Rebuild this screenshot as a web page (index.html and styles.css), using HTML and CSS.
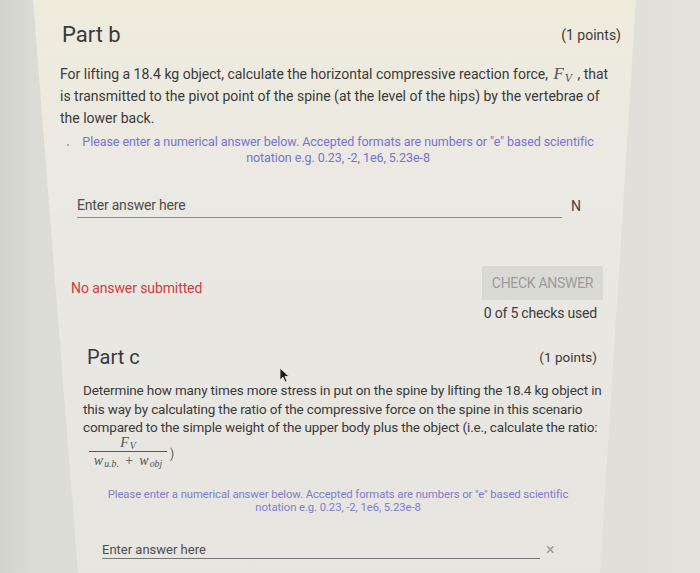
FILE: index.html
```html
<!DOCTYPE html>
<html>
<head>
    <title>Part b / Part c</title>
<link rel="stylesheet" href="styles.css">
</head>
<body>
    <div class="screen">
        <div class="sheet">
            <section class="part part-b">
                <div class="part-head">
                    <h2>Part b</h2>
                    <span class="points">(1 points)</span>
                </div>
                <p class="question">For lifting a 18.4 kg object, calculate the horizontal compressive reaction force, <span class="math">F<sub>V</sub></span> , that is transmitted to the pivot point of the spine (at the level of the hips) by the vertebrae of the lower back.</p>
                <p class="hint">Please enter a numerical answer below. Accepted formats are numbers or "e" based scientific notation e.g. 0.23, -2, 1e6, 5.23e-8</p>
                <div class="answer-row">
                    <div class="answer-field">Enter answer here</div>
                    <span class="unit">N</span>
                </div>
                <div class="check-row">
                    <span class="status">No answer submitted</span>
                    <div class="check">
                        <button type="button">CHECK ANSWER</button>
                        <span class="used">0 of 5 checks used</span>
                    </div>
                </div>
            </section>

            <section class="part part-c">
                <div class="part-head">
                    <h2>Part c</h2>
                    <span class="points">(1 points)</span>
                </div>
                <p class="question">Determine how many times more stress in put on the spine by lifting the 18.4 kg object in this way by calculating the ratio of the compressive force on the spine in this scenario compared to the simple weight of the upper body plus the object (i.e., calculate the ratio:</p>
                <div class="ratio">
                    <span class="frac">
                        <span class="num math">F<sub>V</sub></span>
                        <span class="den math">w<sub>u.b.</sub> + w<sub>obj</sub></span>
                    </span>
                    <span class="close">)</span>
                </div>
                <p class="hint">Please enter a numerical answer below. Accepted formats are numbers or "e" based scientific notation e.g. 0.23, -2, 1e6, 5.23e-8</p>
                <div class="answer-row">
                    <div class="answer-field">Enter answer here</div>
                    <span class="unit clear">&times;</span>
                </div>
            </section>

            <svg class="pointer" width="12" height="16" viewBox="0 0 12 16">
                <path d="M1 1 L1 13 L4 10.2 L6.2 15 L8 14.2 L5.9 9.5 L10 9.5 Z" fill="#1c1c1c" stroke="#e8e7e2" stroke-width="0.8"/>
            </svg>
        </div>
    </div>
</body>
</html>
```

FILE: styles.css
```css
body {
    margin: 0;
    background-color: #d9d9d3;
    font-family: Roboto, "Liberation Sans", sans-serif;
    color: #3a3a3a;
}

.screen {
    width: 700px;
    height: 573px;
    overflow: hidden;
    background: linear-gradient(90deg, #d3d3cd 0%, #dcdcd6 5%, #e0dfda 90%, #e3e2dd 100%);
}

.sheet {
    position: relative;
    isolation: isolate;
    height: 573px;
}

/* the monitor was photographed at an angle, so the page edges lean inwards */
.sheet::before {
    content: "";
    position: absolute;
    inset: 0;
    z-index: -1;
    background: linear-gradient(180deg, #efebdd 0%, #ebe9e2 30%, #e8e7e2 60%, #e6e5e0 100%);
    clip-path: polygon(33px 0, 636px 0, 600px 573px, 78px 573px);
}

.part h2 {
    margin: 0;
    font-weight: 400;
}

.part-head {
    display: flex;
    justify-content: space-between;
    align-items: center;
}

.points {
    color: #3a3a3a;
}

.question {
    margin: 0;
}

.math {
    font-family: "Liberation Serif", "DejaVu Serif", serif;
    font-style: italic;
    color: #555;
}

.question .math {
    font-size: 1.2em;
    padding: 0 2px;
}

.math sub {
    font-size: 0.7em;
    vertical-align: -0.25em;
    line-height: 0;
    padding-left: 1px;
}

.hint {
    position: relative;
    margin: 0;
    text-align: center;
    color: #7674d2;
}

.answer-row {
    display: flex;
    align-items: flex-end;
}

.answer-field {
    border-bottom: 1px solid #8c8c88;
    color: #4e4e4e;
}

.unit {
    color: #444;
}

/* ---- part b ---- */

.part-b {
    padding: 22px 0 0 60px;
    width: 561px;
}

.part-b h2 {
    margin-left: 2px;
    font-size: 22px;
    line-height: 26px;
}

.part-b .points {
    font-size: 14px;
}

.part-b .question {
    margin-top: 15px;
    font-size: 14px;
    line-height: 22px;
}

.part-b .hint {
    margin: 5px 0 0 16px;
    width: 524px;
    font-size: 12.5px;
    line-height: 16px;
    letter-spacing: -0.07px;
}

.part-b .hint::before {
    content: "";
    position: absolute;
    left: -9px;
    top: 10px;
    width: 2px;
    height: 2px;
    border-radius: 50%;
    background-color: #9a9a96;
}

.part-b .answer-row {
    margin: 30px 0 0 17px;
}

.part-b .answer-field {
    width: 485px;
    font-size: 14px;
    line-height: 18px;
    padding-bottom: 3px;
    letter-spacing: -0.2px;
}

.part-b .unit {
    margin: 0 0 3px 9px;
    font-size: 14px;
    line-height: 18px;
}

.check-row {
    display: flex;
    justify-content: space-between;
    margin: 48px 18px 0 11px;
}

.status {
    padding-top: 13px;
    font-size: 14px;
    line-height: 18px;
    color: #cf3c3c;
    letter-spacing: -0.1px;
}

.check {
    display: flex;
    flex-direction: column;
    align-items: flex-end;
}

.check button {
    width: 121px;
    height: 34px;
    border: none;
    border-radius: 2px;
    background-color: #d9d9d5;
    color: #9c9c9a;
    font-family: Roboto, "Liberation Sans", sans-serif;
    font-size: 14px;
    letter-spacing: -0.3px;
}

.used {
    margin: 4px 6px 0 0;
    font-size: 14px;
    line-height: 18px;
    color: #3c3c3c;
    letter-spacing: -0.2px;
}

/* ---- part c ---- */

.part-c {
    padding: 23px 0 0 83px;
    width: 522px;
}

.part-c .part-head {
    padding-right: 8px;
}

.part-c h2 {
    margin-left: 4px;
    font-size: 20px;
    line-height: 24px;
}

.part-c .points {
    font-size: 13.5px;
}

.part-c .question {
    margin-top: 12px;
    font-size: 13.5px;
    line-height: 18.5px;
    letter-spacing: -0.14px;
}

.ratio {
    display: flex;
    align-items: center;
    margin: -2px 0 0 6px;
}

.frac {
    display: inline-flex;
    flex-direction: column;
    align-items: center;
    width: 78px;
    font-size: 14px;
}

.frac .num {
    width: 100%;
    text-align: center;
    line-height: 15px;
    border-bottom: 1px solid #555;
    padding-bottom: 1px;
}

.frac .den {
    margin-top: 2px;
    line-height: 14px;
    white-space: nowrap;
    word-spacing: 2px;
}

.close {
    margin: 6px 0 0 3px;
    font-size: 12px;
    color: #555;
}

.part-c .hint {
    margin: 20px 0 0 21px;
    width: 468px;
    font-size: 11.3px;
    line-height: 13px;
    color: #807cd0;
    letter-spacing: -0.08px;
}

.part-c .answer-row {
    margin: 27px 0 0 19px;
}

.part-c .answer-field {
    width: 438px;
    font-size: 13px;
    line-height: 14px;
    padding-bottom: 1px;
    border-bottom-color: #777;
}

.part-c .unit.clear {
    margin: 0 0 0 6px;
    font-size: 16px;
    line-height: 18px;
    color: #9a9a98;
}

.pointer {
    position: absolute;
    left: 279px;
    top: 367px;
}
```
